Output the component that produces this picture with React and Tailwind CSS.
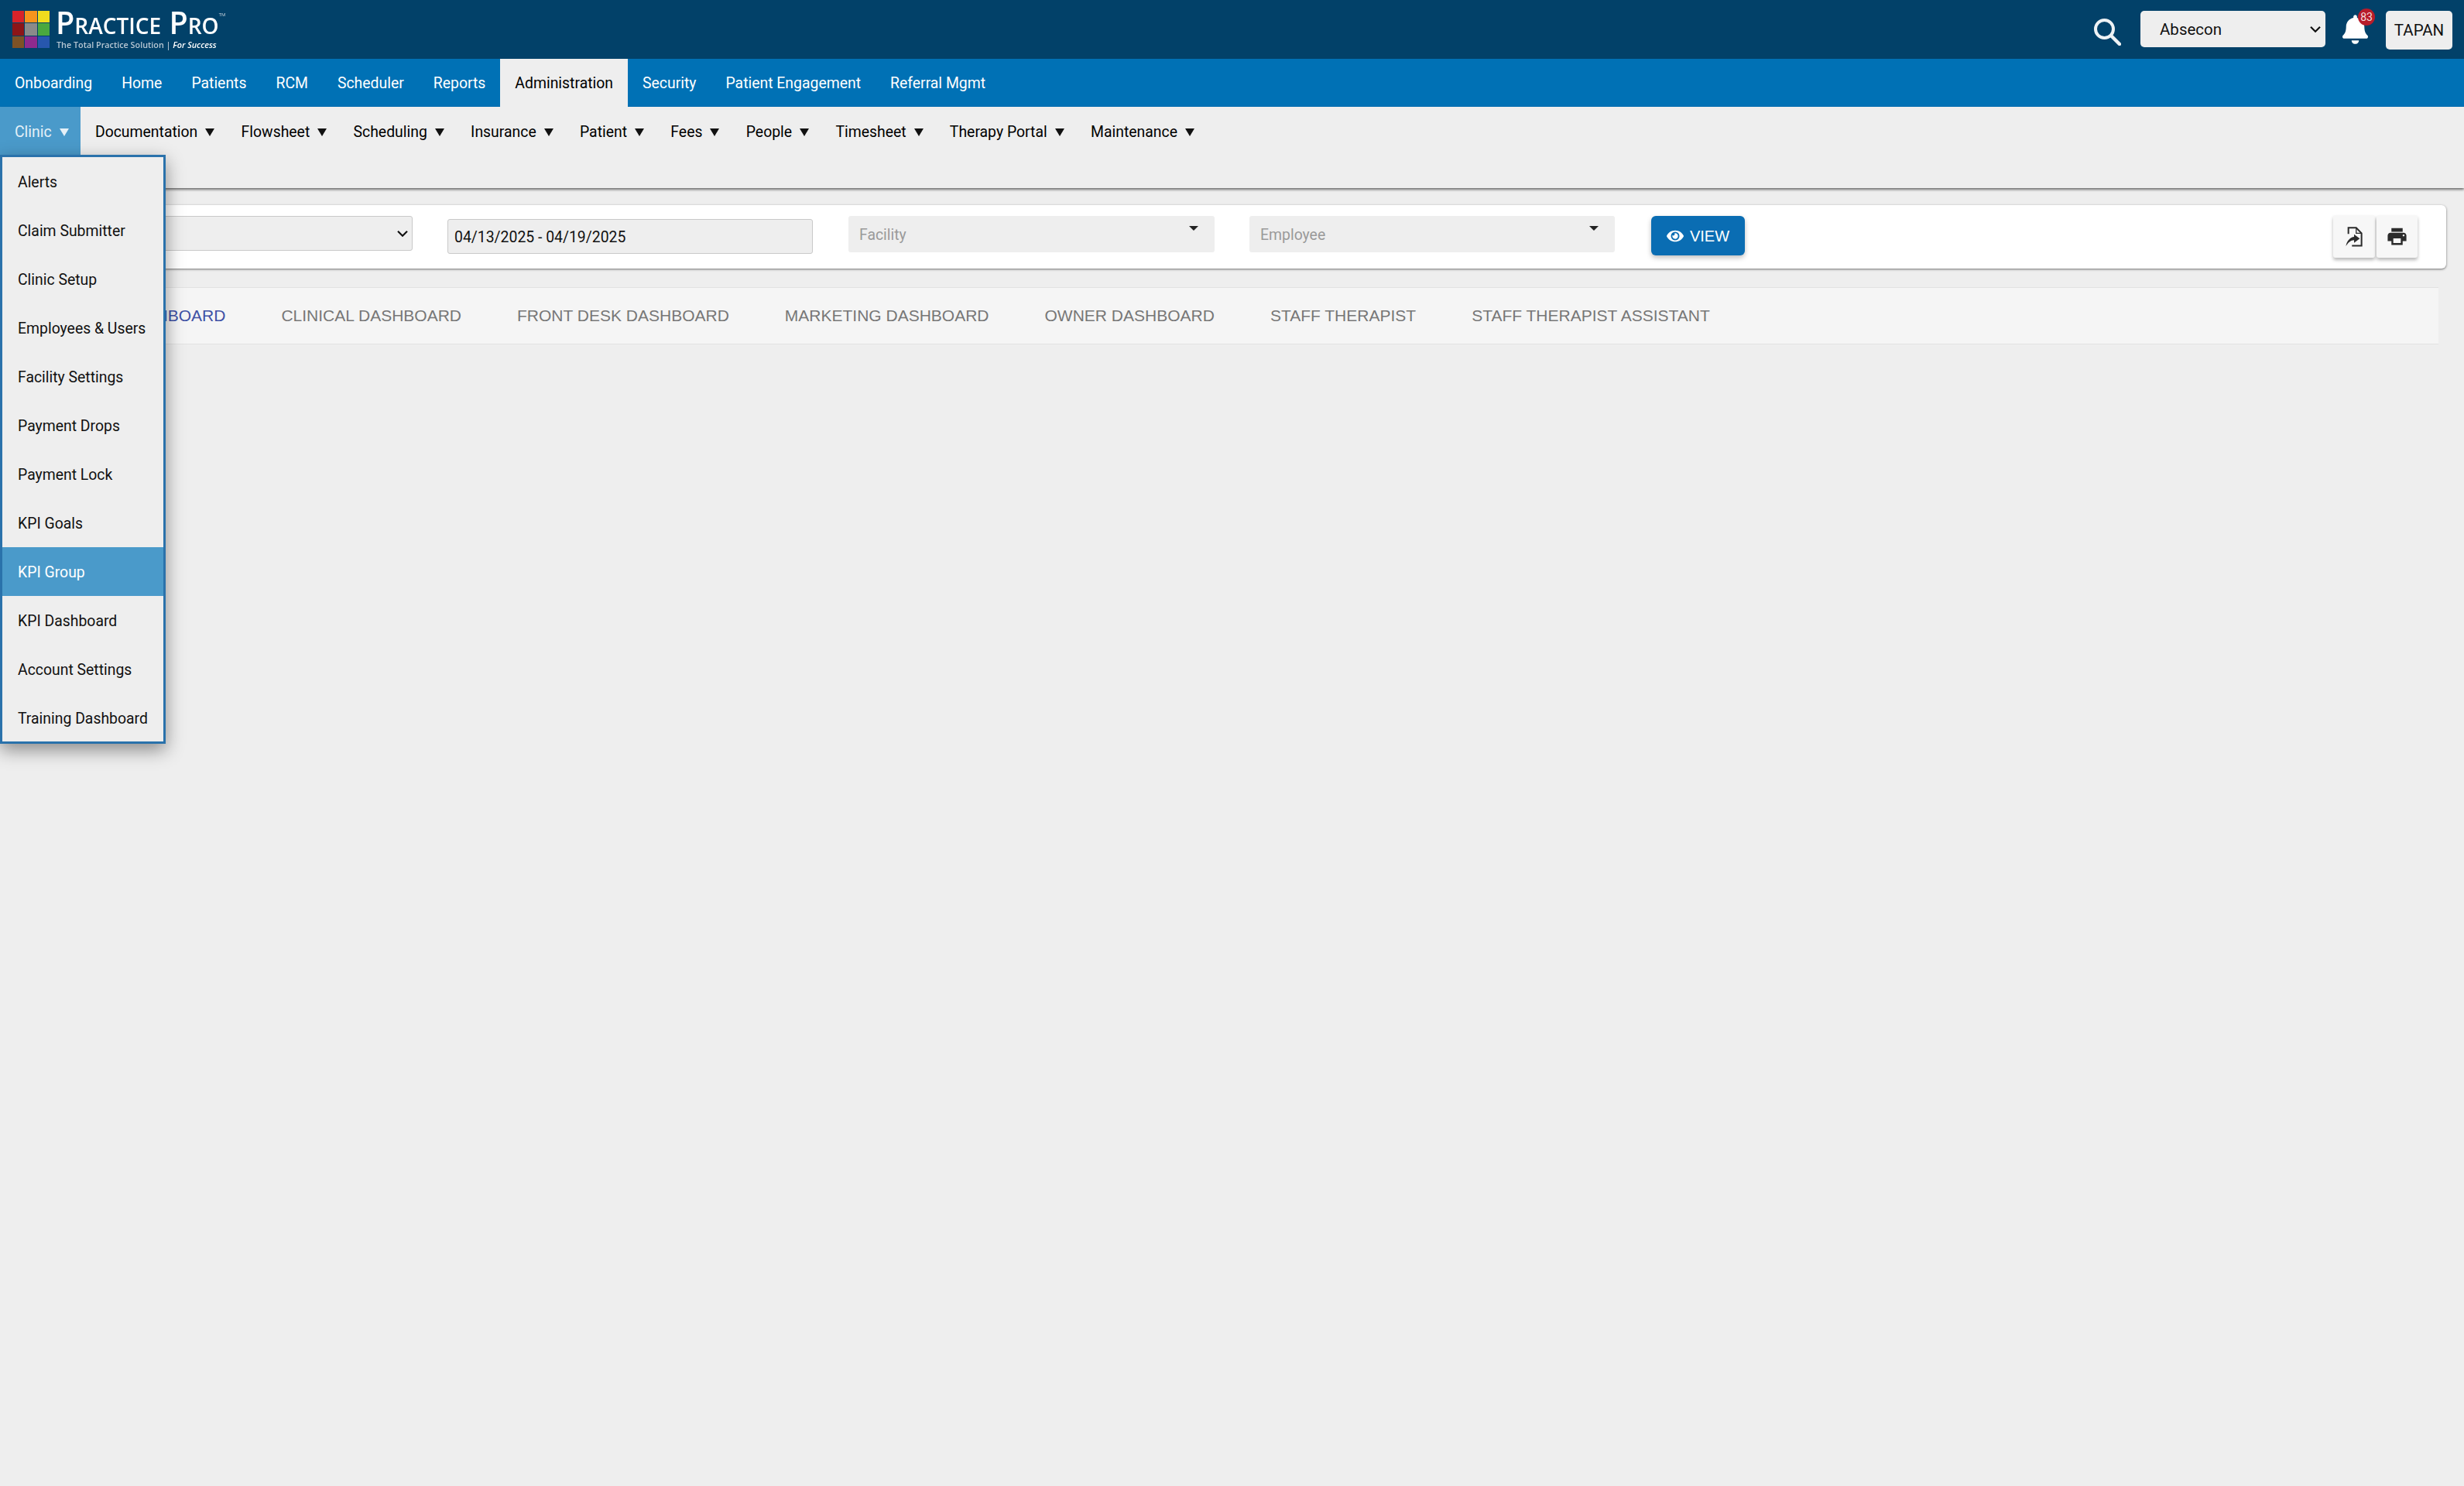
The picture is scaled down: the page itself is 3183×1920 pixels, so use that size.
import React from "react";
import { FaBell, FaEye } from "react-icons/fa";
import { MdPrint } from "react-icons/md";

const mainNav = ["Onboarding", "Home", "Patients", "RCM", "Scheduler", "Reports", "Administration", "Security", "Patient Engagement", "Referral Mgmt"];
const subNav = ["Clinic", "Documentation", "Flowsheet", "Scheduling", "Insurance", "Patient", "Fees", "People", "Timesheet", "Therapy Portal", "Maintenance"];
const menu = ["Alerts", "Claim Submitter", "Clinic Setup", "Employees & Users", "Facility Settings", "Payment Drops", "Payment Lock", "KPI Goals", "KPI Group", "KPI Dashboard", "Account Settings", "Training Dashboard"];
const tabs = ["CLINICAL DASHBOARD", "FRONT DESK DASHBOARD", "MARKETING DASHBOARD", "OWNER DASHBOARD", "STAFF THERAPIST", "STAFF THERAPIST ASSISTANT"];
const logo = ["bg-[#d8232a]", "bg-[#f7941d]", "bg-[#f0dc1e]", "bg-[#8c1518]", "bg-[#8a8a8a]", "bg-[#4aa83f]", "bg-[#7d5226]", "bg-[#8e2a8e]", "bg-[#2757ae]"];

function Logo() {
  return (
    <div className="flex items-start pl-4 pt-[14px] blur-[0.4px]">
      <div className="grid grid-cols-3 gap-px w-[48px] h-[48px]">
        {logo.map((c) => <div key={c} className={c} />)}
      </div>
      <div className="ml-[8px] -mt-[4px] text-white font-['Open_Sans',sans-serif] leading-none">
        <div className="flex items-start">
          <span className="text-[39.5px] leading-[39px] [font-variant:small-caps] font-semibold whitespace-nowrap">Practice Pro</span>
          <span className="text-[6px] leading-none mt-[6px] text-[#c7d3dc]">TM</span>
        </div>
        <div className="ml-[1px] text-[10.8px] leading-[12px] mt-[3px] text-[#b9c8d4] whitespace-nowrap font-semibold">
          The Total Practice Solution | <span className="italic text-white">For Success</span>
        </div>
      </div>
    </div>
  );
}

function SearchIcon() {
  return (
    <svg viewBox="0 0 36 36" className="w-[36px] h-[36px]" fill="none" stroke="#eef2f5" strokeWidth="4">
      <circle cx="14.5" cy="14.5" r="11.5" />
      <path d="M23 23 L34 34" strokeWidth="4.5" strokeLinecap="round" />
    </svg>
  );
}

function ExportIcon() {
  return (
    <svg viewBox="0 0 24 28" className="w-[22px] h-[26px]" fill="none">
      <path d="M4 10 V1.2 H15 L22.5 9 V26.5 H9" stroke="#2b2b2b" strokeWidth="2.2" />
      <path d="M15 1.2 V9 H22.5" stroke="#2b2b2b" strokeWidth="1.4" />
      <path d="M0.5 27 C2 19 7 14.5 12 14 V10.5 L20 16.5 L12 22.5 V18.5 C7.5 18.5 3.5 22 0.5 27 Z" fill="#2b2b2b" />
    </svg>
  );
}

function Chevron() {
  return (
    <svg viewBox="0 0 14 9" className="pointer-events-none absolute right-[6px] top-1/2 h-[9px] w-[14px] -translate-y-1/2" fill="none" stroke="#111" strokeWidth="2.2">
      <path d="M1 1.2 L7 7.2 L13 1.2" />
    </svg>
  );
}

export default function App() {
  return (
    <div className="relative min-h-[1920px] bg-[#eeeeee] font-['Roboto',sans-serif] text-[19.4px] text-black overflow-hidden">
      <header className="flex h-[76px] items-start justify-between bg-[#024169]">
        <Logo />
        <div className="flex items-start pr-[15px]">
          <div className="mt-[23px] mr-[25px]"><SearchIcon /></div>
          <div className="relative mt-[14px] h-[47px] w-[239px]">
            <select defaultValue="Absecon" className="h-full w-full appearance-none rounded-[5px] bg-[#eeeeee] pl-[25px] pt-[1px] text-[20.5px] text-[#111] font-['Roboto',sans-serif]">
              <option>Absecon</option>
            </select>
            <div className="absolute right-[0px] top-0 h-full w-[20px]"><Chevron /></div>
          </div>
          <div className="relative ml-[22px] mt-[18px]">
            <FaBell className="w-[33px] h-[40px] text-white" />
            <span className="absolute -right-[9px] -top-[7px] flex h-[22px] w-[22px] items-center justify-center rounded-full bg-[#b71c2b] text-[14px] leading-none text-[#f3dede]">83</span>
          </div>
          <button className="ml-[23px] mt-[14px] h-[50px] w-[86px] rounded-[5px] bg-[#eeeeee] text-[20.5px] text-[#111]">TAPAN</button>
        </div>
      </header>

      <nav className="flex h-[62px] bg-[#0071b5]">
        {mainNav.map((n) => (
          <div key={n} className={n === "Administration" ? "flex items-center bg-[#eeeeee] px-[19px] pt-[2px] text-black" : "flex items-center px-[19px] pt-[2px] text-white"}>{n}</div>
        ))}
      </nav>

      <div className="h-[105px] bg-[#eeeeee] shadow-[0_2px_3px_rgba(0,0,0,0.55)]">
        <div className="flex h-[62px]">
          {subNav.map((n, i) => (
            <div key={n} className={i === 0 ? "flex items-center gap-[10px] bg-[#4a9aca] pl-[19px] pr-[15.3px] pt-[3px] text-[#e4f0f7]" : "flex items-center gap-[10px] pl-[19px] pr-[15.3px] pt-[3px]"}>
              {n}
              <span className={i === 0 ? "h-0 w-0 border-x-[6px] border-t-[10px] border-x-transparent border-t-[#e4f0f7]" : "h-0 w-0 border-x-[6px] border-t-[10px] border-x-transparent border-t-[#111]"} />
            </div>
          ))}
        </div>
      </div>

      <section className="ml-[12px] mr-[23px] mt-[22px] flex h-[82px] items-start justify-between rounded-r-[6px] bg-white pl-[16px] pr-[37px] pt-[14px] shadow-[0_1px_3px_rgba(0,0,0,0.55)]">
        <div className="flex items-start">
          <div className="relative h-[45px] w-[505px]">
            <select className="h-full w-full appearance-none rounded-[3px] border border-[#c9c9c9] bg-[#eeeeee]"><option></option></select>
            <Chevron />
          </div>
          <div className="ml-[45px] mt-[4px] flex h-[45px] w-[472px] items-center rounded-[3px] border border-[#c9c9c9] bg-[#eeeeee] pl-[8px] pt-[2px] text-[19.4px] text-[#111]">04/13/2025 - 04/19/2025</div>
          <div className="relative ml-[46px] flex h-[47px] w-[473px] items-center rounded-[3px] bg-[#eeeeee] pl-[14px] pt-[3px] text-[#9a9a9a]">
            Facility
            <span className="absolute right-[21px] top-[13px] h-0 w-0 border-x-[6px] border-t-[6px] border-x-transparent border-t-[#222]" />
          </div>
          <div className="relative ml-[45px] flex h-[47px] w-[472px] items-center rounded-[3px] bg-[#eeeeee] pl-[14px] pt-[3px] text-[#9a9a9a]">
            Employee
            <span className="absolute right-[21px] top-[13px] h-0 w-0 border-x-[6px] border-t-[6px] border-x-transparent border-t-[#222]" />
          </div>
          <button className="ml-[47px] flex h-[51px] w-[121px] items-center justify-center gap-[8px] rounded-[6px] bg-[#0a6db3] font-['Liberation_Sans',sans-serif] text-[20px] text-white shadow-[0_3px_6px_rgba(0,0,0,0.25)]">
            <FaEye className="w-[22px] h-[22px]" />VIEW
          </button>
        </div>
        <div className="flex gap-[2px] -mt-px">
          <button className="flex h-[55px] w-[54px] items-center justify-center rounded-[3px] bg-[#f7f7f7] shadow-[0_3px_4px_rgba(0,0,0,0.28)]"><ExportIcon /></button>
          <button className="flex h-[55px] w-[53px] items-center justify-center rounded-[3px] bg-[#f7f7f7] shadow-[0_3px_4px_rgba(0,0,0,0.28)]"><MdPrint className="w-[29px] h-[29px] text-[#2b2b2b]" /></button>
        </div>
      </section>

      <div className="ml-[12px] mr-[33px] mt-[24px] flex h-[74px] items-center border-y border-[#e2e2e2] bg-[#f5f5f5] font-['Liberation_Sans',sans-serif] text-[21px] text-[#777777]">
        <span className="ml-[95px] whitespace-nowrap text-[#3f51a5]">CEO DASHBOARD</span>
        {tabs.map((t) => <span key={t} className="ml-[72px] whitespace-nowrap">{t}</span>)}
      </div>

      <ul className="absolute left-0 top-[200px] h-[761px] w-[214px] overflow-hidden border-[3px] border-[#2a72ab] bg-[#eeeeee] shadow-[0_8px_22px_rgba(0,0,0,0.42)]">
        {menu.map((m) => (
          <li key={m} className={m === "KPI Group" ? "flex h-[63px] items-center bg-[#4a9aca] pl-[20px] pt-[2px] text-white" : "flex h-[63px] items-center pl-[20px] pt-[2px] text-[#111]"}>{m}</li>
        ))}
      </ul>
    </div>
  );
}
